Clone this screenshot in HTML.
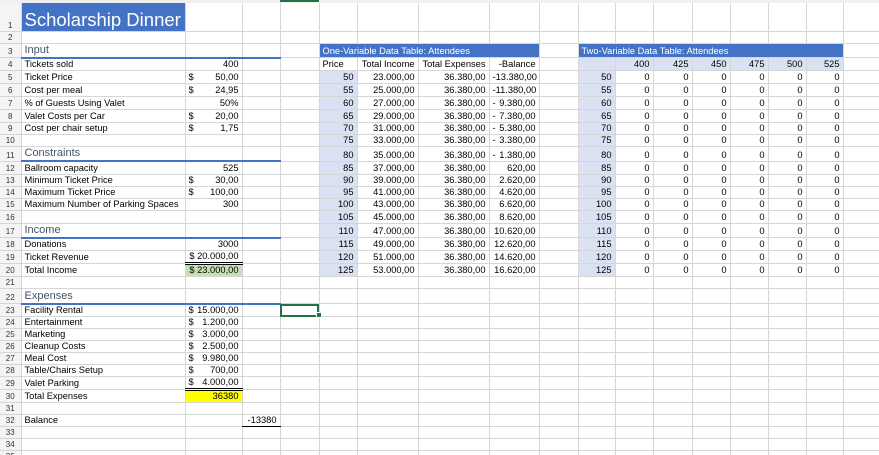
<!DOCTYPE html><html><head><style>
html,body{margin:0;width:879px;height:455px;overflow:hidden}
body{background:#fff;font-family:"Liberation Sans",Arial,sans-serif;position:relative}
table{position:absolute;left:0;top:3px;border-collapse:collapse;table-layout:fixed;width:880px;font-size:9.3px;color:#000}
col{border-right:1px solid #d6d6d6}
tr{border-bottom:1px solid #d6d6d6}
td{padding:0 3px;white-space:nowrap;overflow:hidden;vertical-align:bottom;line-height:11px}
td.h{background:#f4f4f4;text-align:center;font-size:8px;color:#333;padding:0}
.r{text-align:right}
i{float:left;font-style:normal}
.lb{background:#d9e1f2}
.bl{background:#4472c4;color:#fff}
.sec{font-size:11px;color:#44546a;border-bottom:2px solid #4472c4;line-height:13px}
.dbl{border-bottom:3px double #000}
</style></head><body>
<div style="position:absolute;left:0;top:0;width:879px;height:3px;background:#f0f0f0"></div>
<div style="position:absolute;left:280px;top:0;width:39px;height:2px;background:#217346"></div>
<table>
<colgroup><col style="width:21px"><col style="width:164px"><col style="width:57px"><col style="width:38px"><col style="width:39px"><col style="width:38px"><col style="width:61px"><col style="width:71px"><col style="width:50px"><col style="width:39px"><col style="width:37px"><col style="width:38px"><col style="width:39px"><col style="width:38px"><col style="width:38px"><col style="width:38px"><col style="width:37px"><col style="width:37px"></colgroup>
<tr style="height:28px"><td class=h>1</td><td class=bl style="font-size:18.5px;line-height:23px;padding-left:3px;overflow:hidden">Scholarship Dinner</td><td></td><td></td><td></td><td></td><td></td><td></td><td></td><td></td><td></td><td></td><td></td><td></td><td></td><td></td><td></td><td></td></tr>
<tr style="height:12px"><td class=h>2</td><td></td><td></td><td></td><td></td><td></td><td></td><td></td><td></td><td></td><td></td><td></td><td></td><td></td><td></td><td></td><td></td><td></td></tr>
<tr style="height:13px"><td class=h>3</td><td class=sec>Input</td><td class=sec></td><td class=sec></td><td></td><td class=bl colspan=4>One-Variable Data Table: Attendees</td><td></td><td class=bl colspan=7>Two-Variable Data Table: Attendees</td><td></td></tr>
<tr style="height:13px"><td class=h>4</td><td>Tickets sold</td><td class=r>400</td><td></td><td></td><td>Price</td><td class=r>Total Income</td><td class=r>Total Expenses</td><td class=r>-Balance</td><td></td><td class=lb></td><td class="r lb">400</td><td class="r lb">425</td><td class="r lb">450</td><td class="r lb">475</td><td class="r lb">500</td><td class="r lb">525</td><td></td></tr>
<tr style="height:13px"><td class=h>5</td><td>Ticket Price</td><td class=r><i>$</i>50,00</td><td></td><td></td><td class="r lb">50</td><td class=r>23.000,00</td><td class=r>36.380,00</td><td class=r><i>-</i>13.380,00</td><td></td><td class="r lb">50</td><td class=r>0</td><td class=r>0</td><td class=r>0</td><td class=r>0</td><td class=r>0</td><td class=r>0</td><td></td></tr>
<tr style="height:13px"><td class=h>6</td><td>Cost per meal</td><td class=r><i>$</i>24,95</td><td></td><td></td><td class="r lb">55</td><td class=r>25.000,00</td><td class=r>36.380,00</td><td class=r><i>-</i>11.380,00</td><td></td><td class="r lb">55</td><td class=r>0</td><td class=r>0</td><td class=r>0</td><td class=r>0</td><td class=r>0</td><td class=r>0</td><td></td></tr>
<tr style="height:13px"><td class=h>7</td><td>% of Guests Using Valet</td><td class=r>50%</td><td></td><td></td><td class="r lb">60</td><td class=r>27.000,00</td><td class=r>36.380,00</td><td class=r><i>-</i>9.380,00</td><td></td><td class="r lb">60</td><td class=r>0</td><td class=r>0</td><td class=r>0</td><td class=r>0</td><td class=r>0</td><td class=r>0</td><td></td></tr>
<tr style="height:13px"><td class=h>8</td><td>Valet Costs per Car</td><td class=r><i>$</i>20,00</td><td></td><td></td><td class="r lb">65</td><td class=r>29.000,00</td><td class=r>36.380,00</td><td class=r><i>-</i>7.380,00</td><td></td><td class="r lb">65</td><td class=r>0</td><td class=r>0</td><td class=r>0</td><td class=r>0</td><td class=r>0</td><td class=r>0</td><td></td></tr>
<tr style="height:12px"><td class=h>9</td><td>Cost per chair setup</td><td class=r><i>$</i>1,75</td><td></td><td></td><td class="r lb">70</td><td class=r>31.000,00</td><td class=r>36.380,00</td><td class=r><i>-</i>5.380,00</td><td></td><td class="r lb">70</td><td class=r>0</td><td class=r>0</td><td class=r>0</td><td class=r>0</td><td class=r>0</td><td class=r>0</td><td></td></tr>
<tr style="height:12px"><td class=h>10</td><td></td><td></td><td></td><td></td><td class="r lb">75</td><td class=r>33.000,00</td><td class=r>36.380,00</td><td class=r><i>-</i>3.380,00</td><td></td><td class="r lb">75</td><td class=r>0</td><td class=r>0</td><td class=r>0</td><td class=r>0</td><td class=r>0</td><td class=r>0</td><td></td></tr>
<tr style="height:14px"><td class=h>11</td><td class=sec>Constraints</td><td class=sec></td><td class=sec></td><td></td><td class="r lb">80</td><td class=r>35.000,00</td><td class=r>36.380,00</td><td class=r><i>-</i>1.380,00</td><td></td><td class="r lb">80</td><td class=r>0</td><td class=r>0</td><td class=r>0</td><td class=r>0</td><td class=r>0</td><td class=r>0</td><td></td></tr>
<tr style="height:13px"><td class=h>12</td><td>Ballroom capacity</td><td class=r>525</td><td></td><td></td><td class="r lb">85</td><td class=r>37.000,00</td><td class=r>36.380,00</td><td class=r>620,00</td><td></td><td class="r lb">85</td><td class=r>0</td><td class=r>0</td><td class=r>0</td><td class=r>0</td><td class=r>0</td><td class=r>0</td><td></td></tr>
<tr style="height:12px"><td class=h>13</td><td>Minimum Ticket Price</td><td class=r><i>$</i>30,00</td><td></td><td></td><td class="r lb">90</td><td class=r>39.000,00</td><td class=r>36.380,00</td><td class=r>2.620,00</td><td></td><td class="r lb">90</td><td class=r>0</td><td class=r>0</td><td class=r>0</td><td class=r>0</td><td class=r>0</td><td class=r>0</td><td></td></tr>
<tr style="height:12px"><td class=h>14</td><td>Maximum Ticket Price</td><td class=r><i>$</i>100,00</td><td></td><td></td><td class="r lb">95</td><td class=r>41.000,00</td><td class=r>36.380,00</td><td class=r>4.620,00</td><td></td><td class="r lb">95</td><td class=r>0</td><td class=r>0</td><td class=r>0</td><td class=r>0</td><td class=r>0</td><td class=r>0</td><td></td></tr>
<tr style="height:12px"><td class=h>15</td><td>Maximum Number of Parking Spaces</td><td class=r>300</td><td></td><td></td><td class="r lb">100</td><td class=r>43.000,00</td><td class=r>36.380,00</td><td class=r>6.620,00</td><td></td><td class="r lb">100</td><td class=r>0</td><td class=r>0</td><td class=r>0</td><td class=r>0</td><td class=r>0</td><td class=r>0</td><td></td></tr>
<tr style="height:13px"><td class=h>16</td><td></td><td></td><td></td><td></td><td class="r lb">105</td><td class=r>45.000,00</td><td class=r>36.380,00</td><td class=r>8.620,00</td><td></td><td class="r lb">105</td><td class=r>0</td><td class=r>0</td><td class=r>0</td><td class=r>0</td><td class=r>0</td><td class=r>0</td><td></td></tr>
<tr style="height:14px"><td class=h>17</td><td class=sec>Income</td><td class=sec></td><td class=sec></td><td></td><td class="r lb">110</td><td class=r>47.000,00</td><td class=r>36.380,00</td><td class=r>10.620,00</td><td></td><td class="r lb">110</td><td class=r>0</td><td class=r>0</td><td class=r>0</td><td class=r>0</td><td class=r>0</td><td class=r>0</td><td></td></tr>
<tr style="height:13px"><td class=h>18</td><td>Donations</td><td class=r>3000</td><td></td><td></td><td class="r lb">115</td><td class=r>49.000,00</td><td class=r>36.380,00</td><td class=r>12.620,00</td><td></td><td class="r lb">115</td><td class=r>0</td><td class=r>0</td><td class=r>0</td><td class=r>0</td><td class=r>0</td><td class=r>0</td><td></td></tr>
<tr style="height:13px"><td class=h>19</td><td>Ticket Revenue</td><td class="r dbl">$ 20.000,00</td><td></td><td></td><td class="r lb">120</td><td class=r>51.000,00</td><td class=r>36.380,00</td><td class=r>14.620,00</td><td></td><td class="r lb">120</td><td class=r>0</td><td class=r>0</td><td class=r>0</td><td class=r>0</td><td class=r>0</td><td class=r>0</td><td></td></tr>
<tr style="height:13px"><td class=h>20</td><td>Total Income</td><td class=r style="background:#c6e0b4">$ 23.000,00</td><td></td><td></td><td class="r lb">125</td><td class=r>53.000,00</td><td class=r>36.380,00</td><td class=r>16.620,00</td><td></td><td class="r lb">125</td><td class=r>0</td><td class=r>0</td><td class=r>0</td><td class=r>0</td><td class=r>0</td><td class=r>0</td><td></td></tr>
<tr style="height:12px"><td class=h>21</td><td></td><td></td><td></td><td></td><td></td><td></td><td></td><td></td><td></td><td></td><td></td><td></td><td></td><td></td><td></td><td></td><td></td></tr>
<tr style="height:15px"><td class=h>22</td><td class=sec>Expenses</td><td class=sec></td><td class=sec></td><td></td><td></td><td></td><td></td><td></td><td></td><td></td><td></td><td></td><td></td><td></td><td></td><td></td><td></td></tr>
<tr style="height:13px"><td class=h>23</td><td>Facility Rental</td><td class=r><i>$</i>15.000,00</td><td></td><td style="outline:2px solid #217346;outline-offset:-2px"></td><td></td><td></td><td></td><td></td><td></td><td></td><td></td><td></td><td></td><td></td><td></td><td></td><td></td></tr>
<tr style="height:12px"><td class=h>24</td><td>Entertainment</td><td class=r><i>$</i>1.200,00</td><td></td><td></td><td></td><td></td><td></td><td></td><td></td><td></td><td></td><td></td><td></td><td></td><td></td><td></td><td></td></tr>
<tr style="height:12px"><td class=h>25</td><td>Marketing</td><td class=r><i>$</i>3.000,00</td><td></td><td></td><td></td><td></td><td></td><td></td><td></td><td></td><td></td><td></td><td></td><td></td><td></td><td></td><td></td></tr>
<tr style="height:12px"><td class=h>26</td><td>Cleanup Costs</td><td class=r><i>$</i>2.500,00</td><td></td><td></td><td></td><td></td><td></td><td></td><td></td><td></td><td></td><td></td><td></td><td></td><td></td><td></td><td></td></tr>
<tr style="height:12px"><td class=h>27</td><td>Meal Cost</td><td class=r><i>$</i>9.980,00</td><td></td><td></td><td></td><td></td><td></td><td></td><td></td><td></td><td></td><td></td><td></td><td></td><td></td><td></td><td></td></tr>
<tr style="height:12px"><td class=h>28</td><td>Table/Chairs Setup</td><td class=r><i>$</i>700,00</td><td></td><td></td><td></td><td></td><td></td><td></td><td></td><td></td><td></td><td></td><td></td><td></td><td></td><td></td><td></td></tr>
<tr style="height:12px"><td class=h>29</td><td>Valet Parking</td><td class="r dbl"><i>$</i>4.000,00</td><td></td><td></td><td></td><td></td><td></td><td></td><td></td><td></td><td></td><td></td><td></td><td></td><td></td><td></td><td></td></tr>
<tr style="height:13px"><td class=h>30</td><td>Total Expenses</td><td class=r style="background:#ffff00">36380</td><td></td><td></td><td></td><td></td><td></td><td></td><td></td><td></td><td></td><td></td><td></td><td></td><td></td><td></td><td></td></tr>
<tr style="height:12px"><td class=h>31</td><td></td><td></td><td></td><td></td><td></td><td></td><td></td><td></td><td></td><td></td><td></td><td></td><td></td><td></td><td></td><td></td><td></td></tr>
<tr style="height:12px"><td class=h>32</td><td>Balance</td><td></td><td class=r style="border-bottom:1px solid #000">-13380</td><td></td><td></td><td></td><td></td><td></td><td></td><td></td><td></td><td></td><td></td><td></td><td></td><td></td><td></td></tr>
<tr style="height:12px"><td class=h>33</td><td></td><td></td><td></td><td></td><td></td><td></td><td></td><td></td><td></td><td></td><td></td><td></td><td></td><td></td><td></td><td></td><td></td></tr>
<tr style="height:12px"><td class=h>34</td><td></td><td></td><td></td><td></td><td></td><td></td><td></td><td></td><td></td><td></td><td></td><td></td><td></td><td></td><td></td><td></td><td></td></tr>
<tr style="height:12px"><td class=h>35</td><td></td><td></td><td></td><td></td><td></td><td></td><td></td><td></td><td></td><td></td><td></td><td></td><td></td><td></td><td></td><td></td><td></td></tr>
</table>
<div style="position:absolute;left:316px;top:312px;width:4px;height:4px;background:#217346;border:1px solid #fff"></div>
</body></html>
